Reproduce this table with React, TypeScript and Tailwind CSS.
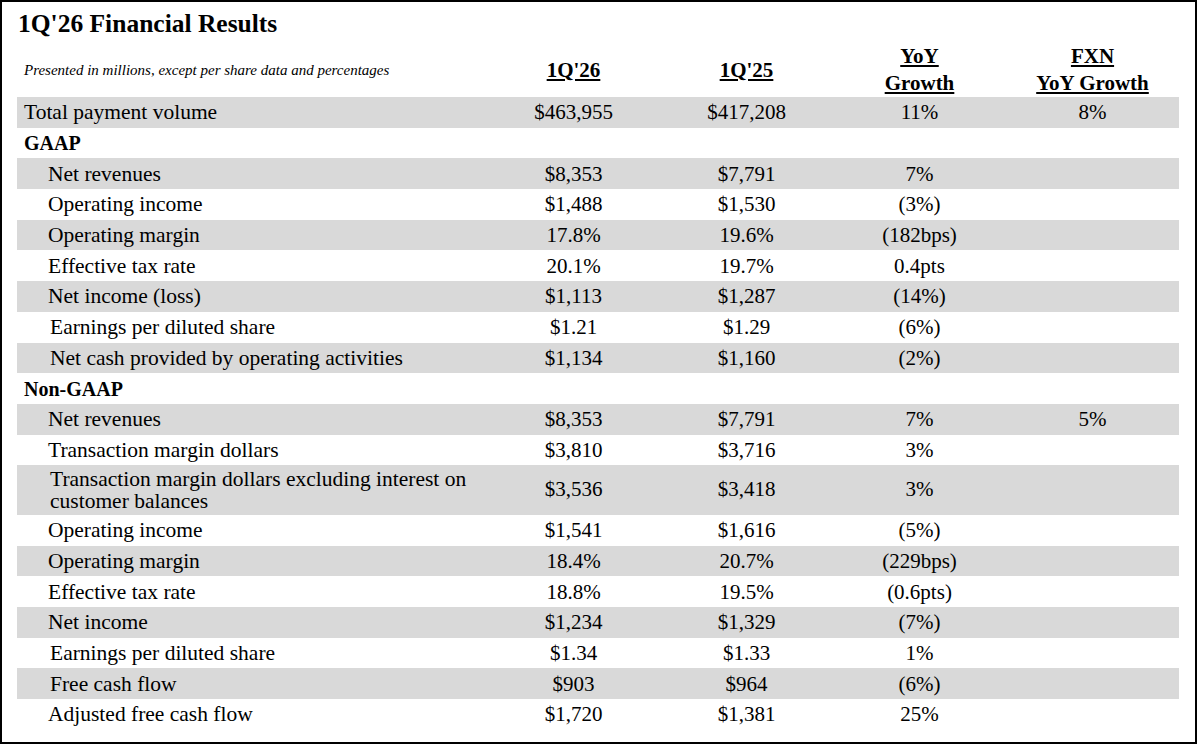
const serif = { fontFamily: '"Liberation Serif", "Times New Roman", serif' };

type Row = {
  label: string;
  indent?: string;
  bold?: boolean;
  a?: string;
  b?: string;
  yoy?: string;
  fxn?: string;
  tall?: boolean;
};

const rows: Row[] = [
  { label: "Total payment volume", indent: "pl-[7px]", a: "$463,955", b: "$417,208", yoy: "11%", fxn: "8%" },
  { label: "GAAP", indent: "pl-[7px]", bold: true },
  { label: "Net revenues", a: "$8,353", b: "$7,791", yoy: "7%" },
  { label: "Operating income", a: "$1,488", b: "$1,530", yoy: "(3%)" },
  { label: "Operating margin", a: "17.8%", b: "19.6%", yoy: "(182bps)" },
  { label: "Effective tax rate", a: "20.1%", b: "19.7%", yoy: "0.4pts" },
  { label: "Net income (loss)", a: "$1,113", b: "$1,287", yoy: "(14%)" },
  { label: "Earnings per diluted share", indent: "pl-[33px]", a: "$1.21", b: "$1.29", yoy: "(6%)" },
  { label: "Net cash provided by operating activities", indent: "pl-[33px]", a: "$1,134", b: "$1,160", yoy: "(2%)" },
  { label: "Non-GAAP", indent: "pl-[7px]", bold: true },
  { label: "Net revenues", a: "$8,353", b: "$7,791", yoy: "7%", fxn: "5%" },
  { label: "Transaction margin dollars", a: "$3,810", b: "$3,716", yoy: "3%" },
  { label: "Transaction margin dollars excluding interest on|customer balances", indent: "pl-[33px]", a: "$3,536", b: "$3,418", yoy: "3%", tall: true },
  { label: "Operating income", a: "$1,541", b: "$1,616", yoy: "(5%)" },
  { label: "Operating margin", a: "18.4%", b: "20.7%", yoy: "(229bps)" },
  { label: "Effective tax rate", a: "18.8%", b: "19.5%", yoy: "(0.6pts)" },
  { label: "Net income", a: "$1,234", b: "$1,329", yoy: "(7%)" },
  { label: "Earnings per diluted share", indent: "pl-[33px]", a: "$1.34", b: "$1.33", yoy: "1%" },
  { label: "Free cash flow", indent: "pl-[33px]", a: "$903", b: "$964", yoy: "(6%)" },
  { label: "Adjusted free cash flow", a: "$1,720", b: "$1,381", yoy: "25%" },
];

function Cell({ children }: { children?: React.ReactNode }) {
  return <div className="w-[173px] text-center">{children}</div>;
}

export default function App() {
  return (
    <div
      style={serif}
      className="w-[1197px] h-[744px] border-2 border-black bg-white text-black pl-[15px] pt-[7px]"
    >
      <h1 className="pl-[1px] text-[25.5px] leading-[30px] font-bold">1Q'26 Financial Results</h1>

      <div className="mt-[4px] flex h-[54px] items-center text-[21px] font-bold leading-[27px]">
        <div className="w-[470px] pl-[7px] text-[15px] font-normal italic">
          Presented in millions, except per share data and percentages
        </div>
        <Cell>
          <span className="underline">1Q'26</span>
        </Cell>
        <Cell>
          <span className="underline">1Q'25</span>
        </Cell>
        <Cell>
          <span className="underline">YoY</span>
          <br />
          <span className="underline">Growth</span>
        </Cell>
        <Cell>
          <span className="underline">FXN</span>
          <br />
          <span className="underline">YoY Growth</span>
        </Cell>
      </div>

      <div className="w-[1162px] text-[21px]">
        {rows.map((r, i) => (
          <div
            key={i}
            className={`flex items-center ${r.tall ? "h-[49.6px]" : "h-[30.7px] leading-[24px]"} ${i % 2 === 0 ? "bg-[#d9d9d9]" : ""}`}
          >
            <div
              className={`w-[470px] ${r.indent ?? "pl-[31px]"} ${r.bold ? "font-bold text-[20px]" : "text-[21.5px]"} ${r.tall ? "leading-[22px]" : ""}`}
            >
              {r.label.split("|").map((t, j) => (
                <div key={j}>{t}</div>
              ))}
            </div>
            <Cell>{r.a}</Cell>
            <Cell>{r.b}</Cell>
            <Cell>{r.yoy}</Cell>
            <Cell>{r.fxn}</Cell>
          </div>
        ))}
      </div>
    </div>
  );
}
